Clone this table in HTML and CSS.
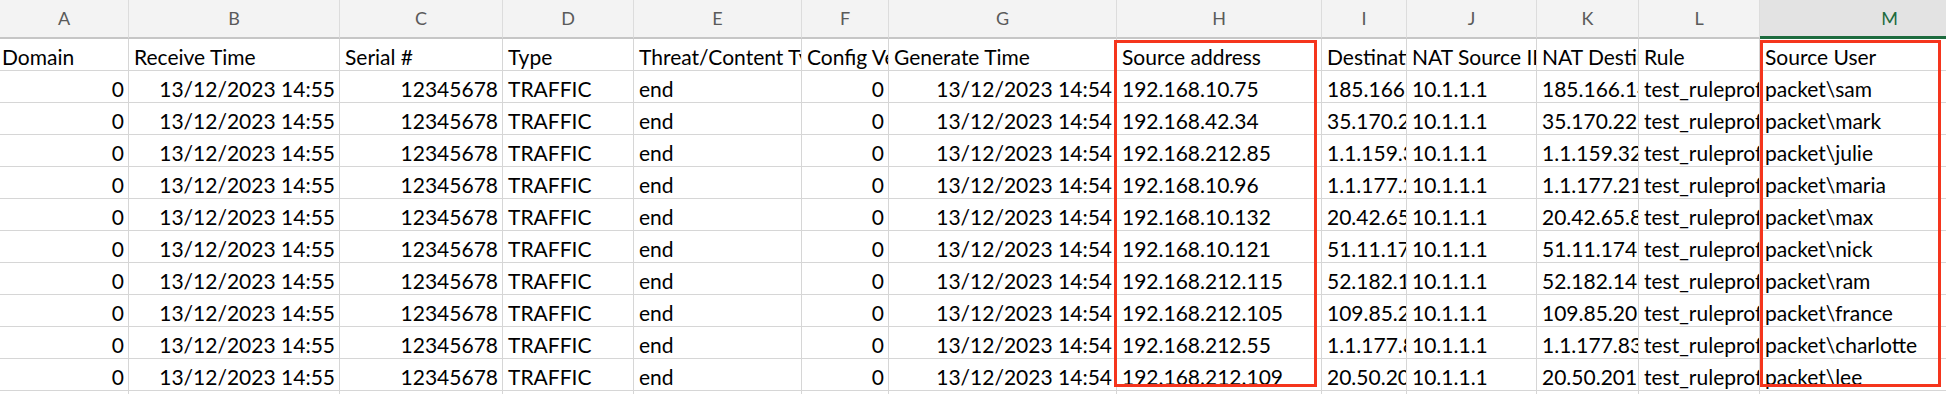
FILE: index.html
```html
<!DOCTYPE html>
<html>
<head>
<meta charset="utf-8">
<link rel="stylesheet" href="styles.css">
</head>
<body>
<div class="wrap">
<div class="sheet">
  <div class="hd">A</div><div class="hd">B</div><div class="hd">C</div><div class="hd">D</div><div class="hd">E</div><div class="hd">F</div><div class="hd">G</div><div class="hd">H</div><div class="hd">I</div><div class="hd">J</div><div class="hd">K</div><div class="hd">L</div><div class="hd sel">M</div>

  <div class="c first">Domain</div><div class="c">Receive Time</div><div class="c">Serial #</div><div class="c">Type</div><div class="c">Threat/Content Type</div><div class="c">Config Version</div><div class="c">Generate Time</div><div class="c">Source address</div><div class="c">Destination address</div><div class="c">NAT Source IP</div><div class="c">NAT Destination IP</div><div class="c">Rule</div><div class="c">Source User</div>

  <div class="c r">0</div><div class="c r">13/12/2023 14:55</div><div class="c r">12345678</div><div class="c">TRAFFIC</div><div class="c">end</div><div class="c r">0</div><div class="c r">13/12/2023 14:54</div><div class="c">192.168.10.75</div><div class="c">185.166.143.24</div><div class="c">10.1.1.1</div><div class="c">185.166.143.24</div><div class="c">test_ruleprofile</div><div class="c">packet\sam</div>

  <div class="c r">0</div><div class="c r">13/12/2023 14:55</div><div class="c r">12345678</div><div class="c">TRAFFIC</div><div class="c">end</div><div class="c r">0</div><div class="c r">13/12/2023 14:54</div><div class="c">192.168.42.34</div><div class="c">35.170.223.10</div><div class="c">10.1.1.1</div><div class="c">35.170.223.10</div><div class="c">test_ruleprofile</div><div class="c">packet\mark</div>

  <div class="c r">0</div><div class="c r">13/12/2023 14:55</div><div class="c r">12345678</div><div class="c">TRAFFIC</div><div class="c">end</div><div class="c r">0</div><div class="c r">13/12/2023 14:54</div><div class="c">192.168.212.85</div><div class="c">1.1.159.32</div><div class="c">10.1.1.1</div><div class="c">1.1.159.32</div><div class="c">test_ruleprofile</div><div class="c">packet\julie</div>

  <div class="c r">0</div><div class="c r">13/12/2023 14:55</div><div class="c r">12345678</div><div class="c">TRAFFIC</div><div class="c">end</div><div class="c r">0</div><div class="c r">13/12/2023 14:54</div><div class="c">192.168.10.96</div><div class="c">1.1.177.21</div><div class="c">10.1.1.1</div><div class="c">1.1.177.21</div><div class="c">test_ruleprofile</div><div class="c">packet\maria</div>

  <div class="c r">0</div><div class="c r">13/12/2023 14:55</div><div class="c r">12345678</div><div class="c">TRAFFIC</div><div class="c">end</div><div class="c r">0</div><div class="c r">13/12/2023 14:54</div><div class="c">192.168.10.132</div><div class="c">20.42.65.89</div><div class="c">10.1.1.1</div><div class="c">20.42.65.89</div><div class="c">test_ruleprofile</div><div class="c">packet\max</div>

  <div class="c r">0</div><div class="c r">13/12/2023 14:55</div><div class="c r">12345678</div><div class="c">TRAFFIC</div><div class="c">end</div><div class="c r">0</div><div class="c r">13/12/2023 14:54</div><div class="c">192.168.10.121</div><div class="c">51.11.174.20</div><div class="c">10.1.1.1</div><div class="c">51.11.174.20</div><div class="c">test_ruleprofile</div><div class="c">packet\nick</div>

  <div class="c r">0</div><div class="c r">13/12/2023 14:55</div><div class="c r">12345678</div><div class="c">TRAFFIC</div><div class="c">end</div><div class="c r">0</div><div class="c r">13/12/2023 14:54</div><div class="c">192.168.212.115</div><div class="c">52.182.143.212</div><div class="c">10.1.1.1</div><div class="c">52.182.143.212</div><div class="c">test_ruleprofile</div><div class="c">packet\ram</div>

  <div class="c r">0</div><div class="c r">13/12/2023 14:55</div><div class="c r">12345678</div><div class="c">TRAFFIC</div><div class="c">end</div><div class="c r">0</div><div class="c r">13/12/2023 14:54</div><div class="c">192.168.212.105</div><div class="c">109.85.206.3</div><div class="c">10.1.1.1</div><div class="c">109.85.206.3</div><div class="c">test_ruleprofile</div><div class="c">packet\france</div>

  <div class="c r">0</div><div class="c r">13/12/2023 14:55</div><div class="c r">12345678</div><div class="c">TRAFFIC</div><div class="c">end</div><div class="c r">0</div><div class="c r">13/12/2023 14:54</div><div class="c">192.168.212.55</div><div class="c">1.1.177.83</div><div class="c">10.1.1.1</div><div class="c">1.1.177.83</div><div class="c">test_ruleprofile</div><div class="c">packet\charlotte</div>

  <div class="c r">0</div><div class="c r">13/12/2023 14:55</div><div class="c r">12345678</div><div class="c">TRAFFIC</div><div class="c">end</div><div class="c r">0</div><div class="c r">13/12/2023 14:54</div><div class="c">192.168.212.109</div><div class="c">20.50.201.195</div><div class="c">10.1.1.1</div><div class="c">20.50.201.195</div><div class="c">test_ruleprofile</div><div class="c">packet\lee</div>

  <div class="c"></div><div class="c"></div><div class="c"></div><div class="c"></div><div class="c"></div><div class="c"></div><div class="c"></div><div class="c"></div><div class="c"></div><div class="c"></div><div class="c"></div><div class="c"></div><div class="c"></div>
</div>
<div class="mark mark-h"></div>
<div class="mark mark-m"></div>
</div>
</body>
</html>
```

FILE: styles.css
```css
html, body {
  margin: 0;
  padding: 0;
  background: #ffffff;
  overflow: hidden;
}
.wrap {
  position: relative;
  width: 1946px;
  height: 394px;
  overflow: hidden;
}
.sheet {
  display: grid;
  grid-template-columns: 129px 211px 163px 131px 168px 87px 228px 205px 85px 130px 102px 121px 260px;
  grid-auto-rows: 32px;
  grid-template-rows: 39px;
  font-family: Lato, "Open Sans", sans-serif;
  color: #000;
}
.hd {
  box-sizing: border-box;
  background: #f3f3f3;
  border-right: 1px solid #dcdcdc;
  border-bottom: 2px solid #c6c6c6;
  color: #5a5a5a;
  font-size: 18px;
  display: flex;
  align-items: center;
  justify-content: center;
  padding-bottom: 1px;
}
.hd.sel {
  background: #e3e3e3;
  color: #1d6b3e;
  border-bottom: 3px solid #1d6b3e;
  padding-bottom: 0;
}
.c {
  box-sizing: border-box;
  border-right: 1px solid #d6d6d6;
  border-bottom: 1px solid #d6d6d6;
  font-size: 21px;
  line-height: 24px;
  white-space: nowrap;
  overflow: hidden;
  padding: 0 4px 1px 5px;
  display: flex;
  align-items: flex-end;
}
.c.first {
  padding-left: 2px;
}
.c.r {
  justify-content: flex-end;
}
.mark {
  position: absolute;
  top: 40px;
  height: 347px;
  box-sizing: border-box;
  border: 3px solid #f5351d;
}
.mark-h {
  left: 1114px;
  width: 203px;
}
.mark-m {
  left: 1760px;
  width: 181px;
}
```
